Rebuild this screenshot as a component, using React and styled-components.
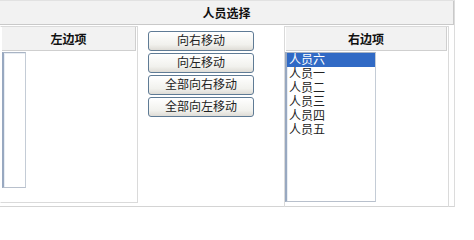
import React from 'react'
import styled, { createGlobalStyle } from 'styled-components'

const Global = createGlobalStyle`
body {
  margin: 0;
  background: #ffffff;
  font-family: "Liberation Sans", "Noto Sans CJK SC", sans-serif;
  font-size: 12px;
  color: #222;
}
`

const Frame = styled.div`
width: 455px;
height: 207px;
box-sizing: border-box;
border-top: 1px solid #e2e2e2;
border-right: 1px solid #dcdcdc;
border-bottom: 1px solid #d4d4d4;
display: flex;
flex-direction: column;
`

const TitleBar = styled.div`
height: 23px;
flex: none;
background: #f2f2f2;
border-bottom: 1px solid #c9c9c9;
border-right: 1px solid #c9c9c9;
display: flex;
align-items: center;
justify-content: center;
font-weight: bold;
font-size: 12px;
color: #111;
`

const Body = styled.div`
display: flex;
align-items: flex-start;
padding-top: 1px;
flex: 1;
`

const Panel = styled.div`
width: ${p => p.$w}px;
height: ${p => p.$h}px;
box-sizing: border-box;
border: 1px solid #dadada;
border-left-color: ${p => (p.$edge ? '#ffffff' : '#dadada')};
border-bottom-color: ${p => (p.$open ? '#ffffff' : '#dadada')};
display: flex;
flex-direction: column;
flex: none;
`

const PanelHead = styled.div`
height: 23px;
margin: 0 1px;
background: #f2f2f2;
border-bottom: 1px solid #cfcfcf;
border-right: 1px solid #cfcfcf;
display: flex;
align-items: center;
justify-content: center;
font-weight: bold;
color: #111;
`

const ListBox = styled.div`
width: ${p => p.$w}px;
height: ${p => p.$h}px;
margin-top: 1px;
box-sizing: border-box;
border: 1px solid #a9b4c4;
border-left: 2px solid #98a8c0;
border-right-color: #c4ccd6;
border-bottom-color: #b8c0cc;
background: #fff;
box-shadow: inset 1px 1px 0 #e8edf3;
`

const Option = styled.div`
height: 14px;
line-height: 14px;
padding-left: 2px;
font-size: 12px;
background: ${p => (p.$selected ? '#316ac5' : 'transparent')};
color: ${p => (p.$selected ? '#fff' : '#222')};
`

const Middle = styled.div`
width: 146px;
flex: none;
display: flex;
flex-direction: column;
gap: 2px;
padding: 5px 0 0 10px;
box-sizing: border-box;
`

const MoveButton = styled.button`
width: 106px;
height: 20px;
padding: 0;
border: 1px solid #5f7b95;
border-radius: 3px;
background: linear-gradient(#ffffff, #f1f1ed 70%, #dedcd6);
font-family: "Liberation Sans", "Noto Sans CJK SC", sans-serif;
font-size: 12px;
color: #222;
line-height: 18px;
`

const people = ['人员六', '人员一', '人员二', '人员三', '人员四', '人员五']

export default function App() {
  return (
    <>
      <Global />
      <Frame>
        <TitleBar>人员选择</TitleBar>
        <Body>
          <Panel $w={138} $h={177} $edge>
            <PanelHead>左边项</PanelHead>
            <ListBox $w={24} $h={136} style={{ marginLeft: 1 }} />
          </Panel>
          <Middle>
            <MoveButton>向右移动</MoveButton>
            <MoveButton>向左移动</MoveButton>
            <MoveButton>全部向右移动</MoveButton>
            <MoveButton>全部向左移动</MoveButton>
          </Middle>
          <Panel $w={165} $h={182} $open>
            <PanelHead>右边项</PanelHead>
            <ListBox $w={91} $h={150}>
              {people.map((p, i) => (
                <Option key={p} $selected={i === 0}>{p}</Option>
              ))}
            </ListBox>
          </Panel>
        </Body>
      </Frame>
    </>
  )
}
